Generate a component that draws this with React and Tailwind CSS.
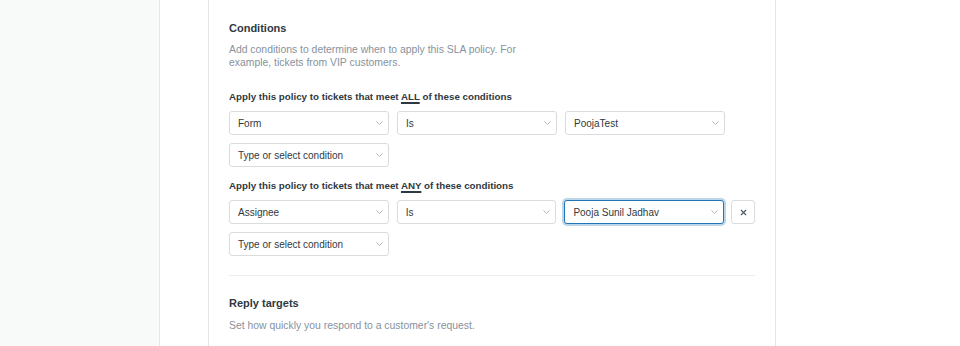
import { X } from 'lucide-react';

const Chevron = () => (
  <svg width="7" height="4" viewBox="0 0 7 4" fill="none" className="shrink-0">
    <path d="M0.5 0.5l3 3 3-3" stroke="#b0b8be" strokeWidth="1" />
  </svg>
);

const Select = ({ value, focused }) => (
  <div
    className={`flex h-6 w-[160px] items-center justify-between rounded-[3px] border bg-white pl-[8px] pr-[5px] text-[10px] text-[#2f3941] ${
      focused
        ? 'border-[#1f73b7] shadow-[0_0_0_2px_rgba(31,115,183,0.3)]'
        : 'border-[#d8dcde]'
    }`}
  >
    <span>{value}</span>
    <Chevron />
  </div>
);

const ConditionGroup = ({ word, rows, showRemove }) => (
  <div>
    <p className="mb-[7px] text-[9.75px] leading-[14px] font-bold text-[#2f3941]">
      Apply this policy to tickets that meet{' '}
      <span className="underline decoration-[1.5px] underline-offset-[2px]">{word}</span> of these conditions
    </p>
    <div className="flex flex-col gap-2">
      <div className="flex items-center gap-2">
        {rows.map((v, i) => (
          <Select key={i} value={v} focused={showRemove && i === 2} />
        ))}
        {showRemove && (
          <button className="-ml-px flex h-6 w-6 items-center justify-center rounded-[3px] border border-[#d8dcde] bg-white text-[#49545c]">
            <X size={9} strokeWidth={3} />
          </button>
        )}
      </div>
      <Select value="Type or select condition" />
    </div>
  </div>
);

export default function App() {
  return (
    <div
      className="flex h-[346px] w-[960px] overflow-hidden bg-white"
      style={{ fontFamily: '"Liberation Sans", Arial, sans-serif' }}
    >
      <aside className="w-[160px] shrink-0 border-r border-[#e4e7e8] bg-[#f8f9f9]" />
      <div className="flex-1 pl-[48px]">
        <section className="h-full w-[568px] border-x border-[#e4e7e8] px-[20px] pt-[21px]">
          <h2 className="text-[11px] leading-[14px] font-bold text-[#2f3941]">Conditions</h2>
          <p className="mt-[8px] w-[300px] text-[10.4px] leading-[13px] text-[#87929d]">
            Add conditions to determine when to apply this SLA policy. For example, tickets from VIP customers.
          </p>
          <div className="mt-[21px] flex flex-col gap-[12px]">
            <ConditionGroup word="ALL" rows={['Form', 'Is', 'PoojaTest']} />
            <ConditionGroup word="ANY" rows={['Assignee', 'Is', 'Pooja Sunil Jadhav']} showRemove />
          </div>
          <hr className="mt-[19px] border-[#eceeef]" />
          <h2 className="mt-[20px] text-[11px] leading-[14px] font-bold text-[#2f3941]">Reply targets</h2>
          <p className="mt-[9px] text-[10.4px] leading-[13px] text-[#87929d]">
            Set how quickly you respond to a customer's request.
          </p>
        </section>
      </div>
    </div>
  );
}
